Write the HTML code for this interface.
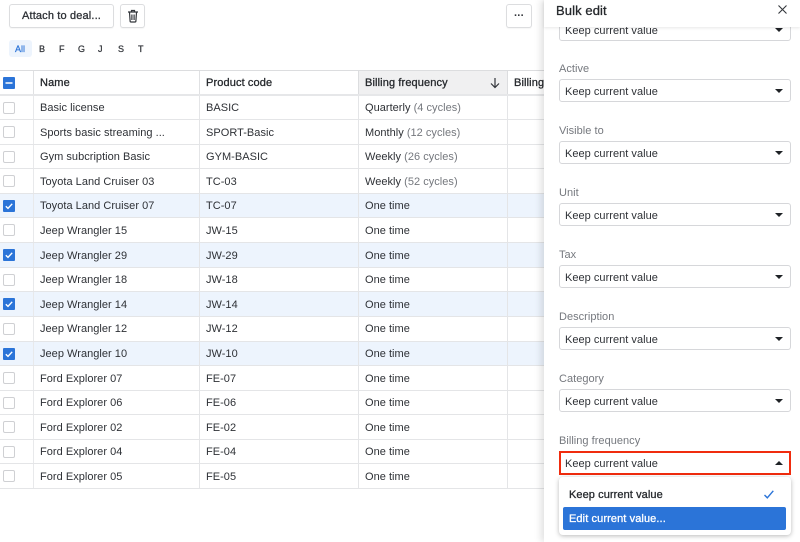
<!DOCTYPE html>
<html><head><meta charset="utf-8"><style>
html,body{margin:0;padding:0}
body{width:800px;height:542px;overflow:hidden;position:relative;background:#fff;font-family:"Liberation Sans",sans-serif;font-size:11px;color:#2e3136;letter-spacing:.03px}
div,span,svg{box-sizing:border-box}
.a{position:absolute}
.st{-webkit-text-stroke:.3px currentColor}
.btn{position:absolute;top:4px;height:24px;border:1px solid #dcdddf;border-radius:3px;background:#fff;box-shadow:0 1px 1px rgba(0,0,0,.04)}
.f{position:absolute;top:41px;height:17px;line-height:17px;font-size:9px;color:#33363b;letter-spacing:0;-webkit-text-stroke:.25px currentColor}
.r{position:absolute;left:0;width:545px;height:25px;border-top:1px solid #e4e5e7;background:#fff}
.r.s{background:#edf4fd}
.r .n,.r .c,.r .b{position:absolute;top:0;line-height:24px;white-space:nowrap}
.r.d .n,.r.d .c,.r.d .b{line-height:26px}
.n{left:40px}.c{left:206px}.b{left:365px}
.r i{position:absolute;left:33px;top:0;height:25px;width:1px;background:#e8e9eb}
.r u{position:absolute;left:199px;top:0;height:25px;width:1px;background:#e4e5e7}
.r em{position:absolute;left:358px;top:0;height:25px;width:1px;background:#e4e5e7}
.r b{position:absolute;left:507px;top:0;height:25px;width:1px;background:#e4e5e7}
.g{color:#75787e}
.cb{position:absolute;left:3px;top:6px;width:12px;height:12px;border:1px solid #cfd0d3;border-radius:2px;background:#fff}
.cb.on{background:#2b74d8;border-color:#2b74d8;border-radius:1px}
.cb svg{position:absolute;left:-1px;top:-1px}
.h{position:absolute;top:71px;height:25px;line-height:25px;color:#26292d;-webkit-text-stroke:.3px currentColor;letter-spacing:.12px}
.l{position:absolute;left:559px;color:#75787e;height:14px;line-height:14px}
.sel{position:absolute;left:559px;width:232px;height:23px;border:1px solid #d6d7da;border-radius:3px;background:#fff;line-height:24px;padding-left:5px;color:#2e3136}
.sel:after{content:"";position:absolute;right:7px;top:9px;border-left:4px solid transparent;border-right:4px solid transparent;border-top:4px solid #1f2226}
</style></head><body>

<div class="btn st" style="left:9px;width:105px;text-align:center;line-height:22px;color:#2e3136;letter-spacing:.15px">Attach to deal...</div>
<div class="btn" style="left:120px;width:25px"><svg class="a" style="left:6px;top:4px" width="12" height="14" viewBox="0 0 12 14"><path d="M1 3h10M4.500 3V1.500h3V3M2.500 3.500l.6 8.500a1 1 0 0 0 1 1h3.800a1 1 0 0 0 1-1l.6-8.500" fill="none" stroke="#33363b" stroke-width="1.200"/><path d="M4.700 5.500v5.500M6 5.500v5.500M7.300 5.500v5.500" stroke="#33363b" stroke-width=".8"/></svg></div>
<div class="btn" style="left:506px;width:26px;text-align:center;line-height:16px;font-weight:bold;letter-spacing:.3px;color:#33363b">...</div>

<div class="a" style="left:9px;top:40px;width:23px;height:17px;background:#edf4fd;border-radius:3px"></div>
<div class="f" style="left:15px;color:#2b74d8">All</div>
<div class="f" style="left:39px">B</div>
<div class="f" style="left:59px">F</div>
<div class="f" style="left:78px">G</div>
<div class="f" style="left:98px">J</div>
<div class="f" style="left:118px">S</div>
<div class="f" style="left:138px">T</div>

<div class="a" style="left:0;top:70px;width:545px;height:1px;background:#dcdddf"></div>
<div class="a" style="left:358px;top:71px;width:149px;height:24px;background:#f0f0f1"></div>
<div class="a" style="left:33px;top:71px;width:1px;height:25px;background:#e0e1e3"></div>
<div class="a" style="left:199px;top:71px;width:1px;height:25px;background:#e0e1e3"></div>
<div class="a" style="left:358px;top:71px;width:1px;height:25px;background:#dcdddf"></div>
<div class="a" style="left:507px;top:71px;width:1px;height:25px;background:#dcdddf"></div>
<div class="h" style="left:40px">Name</div>
<div class="h" style="left:206px">Product code</div>
<div class="h" style="left:365px">Billing frequency</div>
<div class="h" style="left:514px">Billing</div>
<svg class="a" style="left:489px;top:77px" width="12" height="12" viewBox="0 0 12 12"><path d="M6 1v9.500M2 6.500l4 4 4-4" fill="none" stroke="#33363b" stroke-width="1.200"/></svg>
<div class="cb on" style="top:77px"><svg width="12" height="12" viewBox="0 0 12 12"><path d="M2.500 6h7" stroke="#fff" stroke-width="1.500"/></svg></div>

<div class="r" style="top:95px"><div class="cb"></div><i></i><u></u><em></em><b></b><span class="n">Basic license</span><span class="c">BASIC</span><span class="b">Quarterly <span class="g">(4 cycles)</span></span></div>
<div class="a" style="left:0;top:94px;width:545px;height:2px;background:#e6e7e9"></div>
<div class="r d" style="top:119px"><div class="cb"></div><i></i><u></u><em></em><b></b><span class="n">Sports basic streaming ...</span><span class="c">SPORT-Basic</span><span class="b">Monthly <span class="g">(12 cycles)</span></span></div>
<div class="r" style="top:144px"><div class="cb"></div><i></i><u></u><em></em><b></b><span class="n">Gym subcription Basic</span><span class="c">GYM-BASIC</span><span class="b">Weekly <span class="g">(26 cycles)</span></span></div>
<div class="r d" style="top:168px"><div class="cb"></div><i></i><u></u><em></em><b></b><span class="n">Toyota Land Cruiser 03</span><span class="c">TC-03</span><span class="b">Weekly <span class="g">(52 cycles)</span></span></div>
<div class="r s" style="top:193px"><div class="cb on"><svg width="12" height="12" viewBox="0 0 12 12"><path d="M2.800 6.200l2.200 2.200 4.200-4.600" fill="none" stroke="#fff" stroke-width="1.400"/></svg></div><i></i><u></u><em></em><b></b><span class="n">Toyota Land Cruiser 07</span><span class="c">TC-07</span><span class="b">One time</span></div>
<div class="r d" style="top:217px"><div class="cb"></div><i></i><u></u><em></em><b></b><span class="n">Jeep Wrangler 15</span><span class="c">JW-15</span><span class="b">One time</span></div>
<div class="r s d" style="top:242px"><div class="cb on"><svg width="12" height="12" viewBox="0 0 12 12"><path d="M2.800 6.200l2.200 2.200 4.200-4.600" fill="none" stroke="#fff" stroke-width="1.400"/></svg></div><i></i><u></u><em></em><b></b><span class="n">Jeep Wrangler 29</span><span class="c">JW-29</span><span class="b">One time</span></div>
<div class="r" style="top:267px"><div class="cb"></div><i></i><u></u><em></em><b></b><span class="n">Jeep Wrangler 18</span><span class="c">JW-18</span><span class="b">One time</span></div>
<div class="r s d" style="top:291px"><div class="cb on"><svg width="12" height="12" viewBox="0 0 12 12"><path d="M2.800 6.200l2.200 2.200 4.200-4.600" fill="none" stroke="#fff" stroke-width="1.400"/></svg></div><i></i><u></u><em></em><b></b><span class="n">Jeep Wrangler 14</span><span class="c">JW-14</span><span class="b">One time</span></div>
<div class="r" style="top:316px"><div class="cb"></div><i></i><u></u><em></em><b></b><span class="n">Jeep Wrangler 12</span><span class="c">JW-12</span><span class="b">One time</span></div>
<div class="r s" style="top:341px"><div class="cb on"><svg width="12" height="12" viewBox="0 0 12 12"><path d="M2.800 6.200l2.200 2.200 4.200-4.600" fill="none" stroke="#fff" stroke-width="1.400"/></svg></div><i></i><u></u><em></em><b></b><span class="n">Jeep Wrangler 10</span><span class="c">JW-10</span><span class="b">One time</span></div>
<div class="r d" style="top:365px"><div class="cb"></div><i></i><u></u><em></em><b></b><span class="n">Ford Explorer 07</span><span class="c">FE-07</span><span class="b">One time</span></div>
<div class="r" style="top:390px"><div class="cb"></div><i></i><u></u><em></em><b></b><span class="n">Ford Explorer 06</span><span class="c">FE-06</span><span class="b">One time</span></div>
<div class="r d" style="top:414px"><div class="cb"></div><i></i><u></u><em></em><b></b><span class="n">Ford Explorer 02</span><span class="c">FE-02</span><span class="b">One time</span></div>
<div class="r" style="top:439px"><div class="cb"></div><i></i><u></u><em></em><b></b><span class="n">Ford Explorer 04</span><span class="c">FE-04</span><span class="b">One time</span></div>
<div class="r d" style="top:463px"><div class="cb"></div><i></i><u></u><em></em><b></b><span class="n">Ford Explorer 05</span><span class="c">FE-05</span><span class="b">One time</span></div>
<div class="a" style="left:0;top:488px;width:545px;height:1px;background:#e4e5e7"></div>

<!-- panel -->
<div class="a" style="left:544px;top:0;width:256px;height:542px;background:#fff;box-shadow:-3px 0 7px rgba(0,0,0,.12)"></div>
<div class="sel" style="top:18px">Keep current value</div>
<div class="l" style="top:62px">Active</div>
<div class="sel" style="top:79px">Keep current value</div>
<div class="l" style="top:124px">Visible to</div>
<div class="sel" style="top:141px">Keep current value</div>
<div class="l" style="top:186px">Unit</div>
<div class="sel" style="top:203px">Keep current value</div>
<div class="l" style="top:248px">Tax</div>
<div class="sel" style="top:265px">Keep current value</div>
<div class="l" style="top:310px">Description</div>
<div class="sel" style="top:327px">Keep current value</div>
<div class="l" style="top:372px">Category</div>
<div class="sel" style="top:389px">Keep current value</div>
<div class="l" style="top:434px">Billing frequency</div>
<div class="a" style="left:559px;top:451px;width:232px;height:24px;border:2px solid #f02c0e;line-height:22px;padding-left:4px">Keep current value<span class="a" style="right:6px;top:8px;border-left:4px solid transparent;border-right:4px solid transparent;border-bottom:4px solid #1f2226"></span></div>
<div class="a" style="left:559px;top:477px;width:232px;height:58px;background:#fff;border-radius:4px;box-shadow:0 1px 5px rgba(0,0,0,.28)"></div>
<div class="a st" style="left:569px;top:488px;line-height:15px;color:#26292d;letter-spacing:.08px">Keep current value</div>
<svg class="a" style="left:763px;top:489px" width="12" height="11" viewBox="0 0 12 11"><path d="M1.500 6l2.800 2.800 6-7" fill="none" stroke="#2b74d8" stroke-width="1.400"/></svg>
<div class="a st" style="left:563px;top:507px;width:223px;height:23px;background:#2b74d8;border-radius:2px;color:#fff;line-height:25px;padding-left:6px;letter-spacing:.1px">Edit current value...</div>

<div class="a" style="left:544px;top:0;width:256px;height:27px;background:#fff;box-shadow:0 1px 3px rgba(0,0,0,.1)"></div>
<div class="a st" style="left:556px;top:3px;line-height:16px;font-size:13px;color:#26292d;letter-spacing:.1px">Bulk edit</div>
<svg class="a" style="left:777px;top:4px" width="11" height="11" viewBox="0 0 11 11"><path d="M1.500 1.500l8 8M9.500 1.500l-8 8" stroke="#33363b" stroke-width="1.100"/></svg>
</body></html>
